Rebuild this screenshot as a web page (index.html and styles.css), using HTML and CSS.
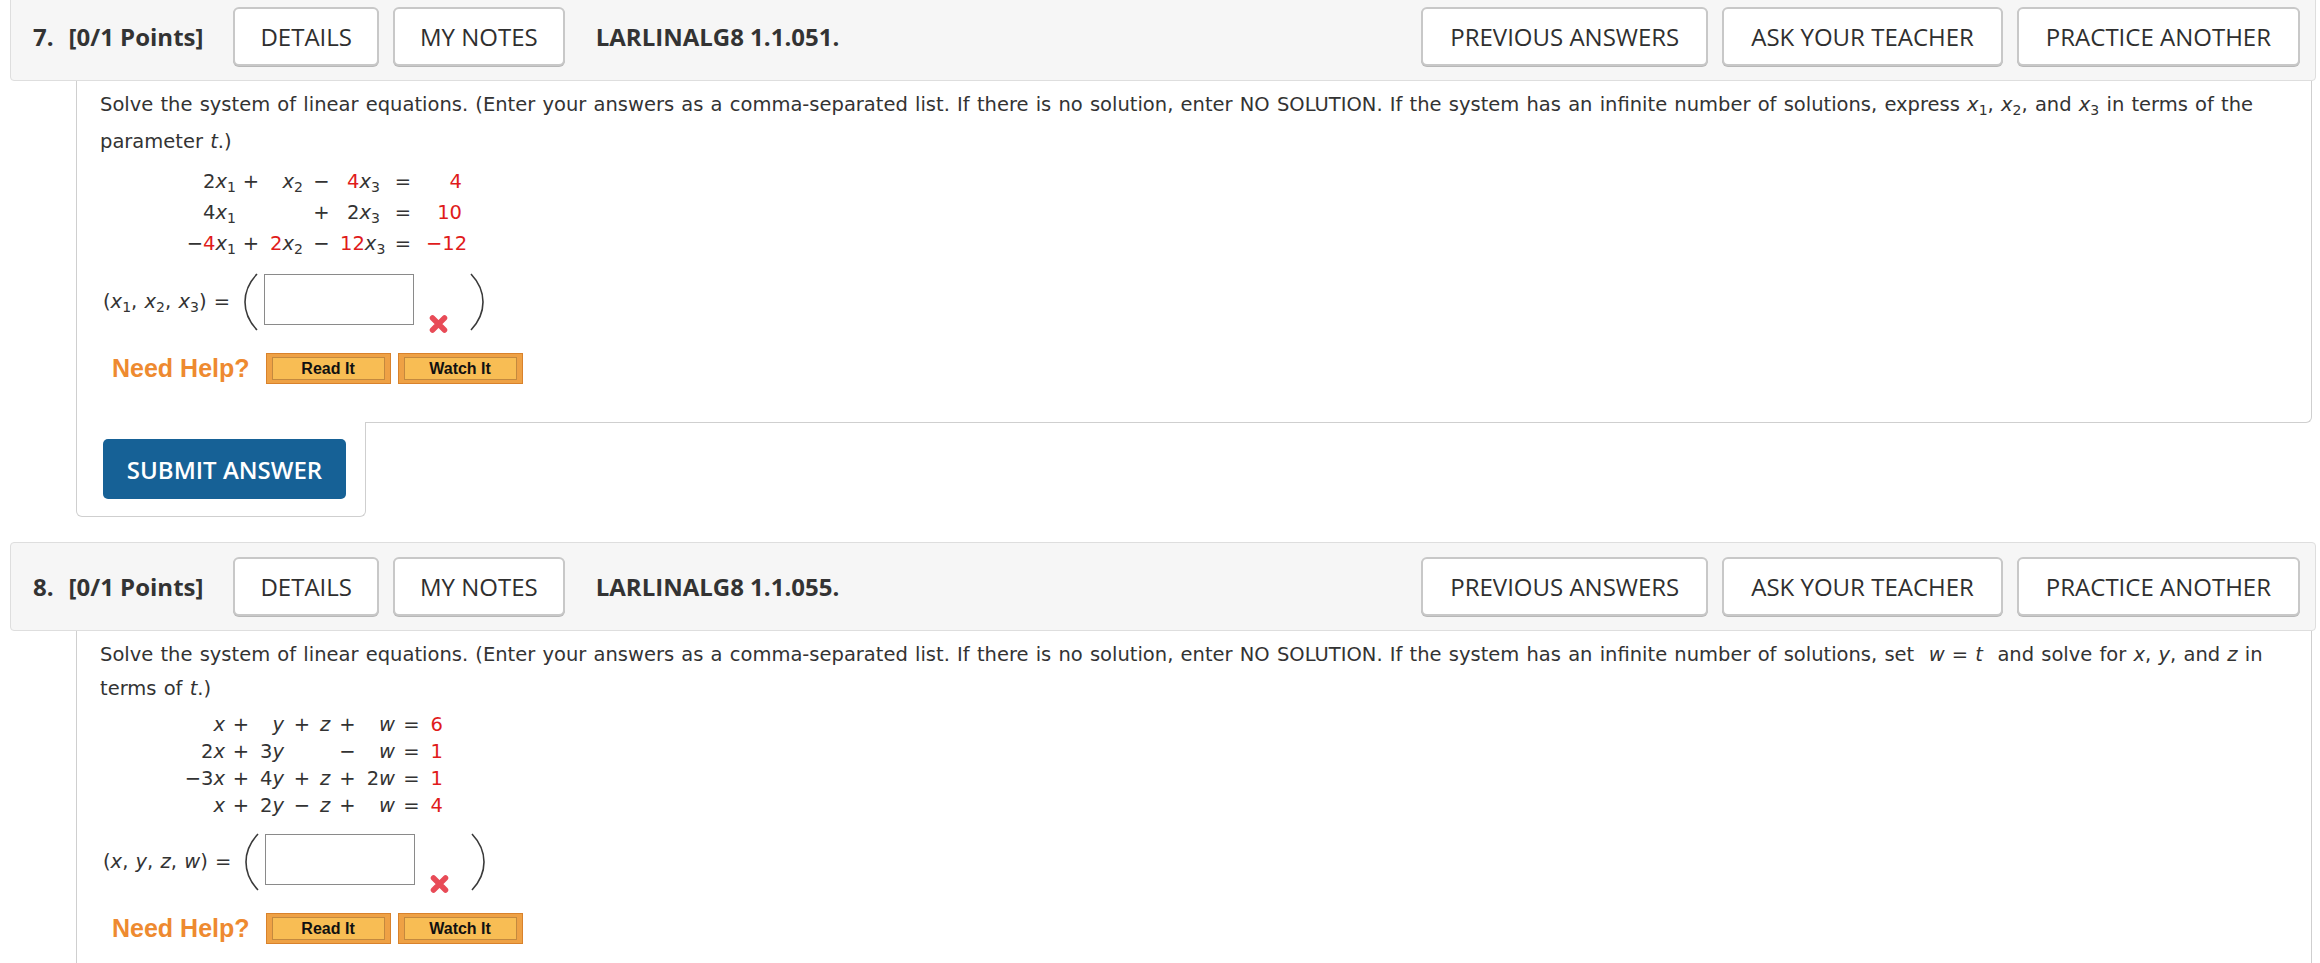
FILE: index.html
```html
<!DOCTYPE html>
<html lang="en">
<head>
<meta charset="utf-8">
<title>Questions</title>
<link rel="stylesheet" href="styles.css">
</head>
<body>
<div class="page">

  <section class="question">
    <header class="q-head">
      <span class="q-num">7.</span>
      <span class="q-pts">[0/1 Points]</span>
      <div class="btns">
        <button class="hbtn">DETAILS</button>
        <button class="hbtn">MY NOTES</button>
      </div>
      <span class="q-code">LARLINALG8 1.1.051.</span>
      <div class="btns btns-right">
        <button class="hbtn">PREVIOUS ANSWERS</button>
        <button class="hbtn">ASK YOUR TEACHER</button>
        <button class="hbtn">PRACTICE ANOTHER</button>
      </div>
    </header>
    <div class="q-body">
      <p class="q-text">Solve the system of linear equations. (Enter your answers as a comma-separated list. If there is no solution, enter NO SOLUTION. If the system has an infinite number of solutions, express <i>x</i><sub>1</sub>, <i>x</i><sub>2</sub>, and <i>x</i><sub>3</sub> in terms of the parameter <i>t</i>.)</p>
      <div class="eqs eqs7">
        <span class="t">2<i>x</i><sub>1</sub></span><span class="o">+</span><span class="t"><i>x</i><sub>2</sub></span><span class="o">−</span><span class="t"><span class="r">4</span><i>x</i><sub>3</sub></span><span class="o">=</span><span class="t r">4</span>
        <span class="t">4<i>x</i><sub>1</sub></span><span class="o"></span><span class="t"></span><span class="o">+</span><span class="t">2<i>x</i><sub>3</sub></span><span class="o">=</span><span class="t r">10</span>
        <span class="t">−<span class="r">4</span><i>x</i><sub>1</sub></span><span class="o">+</span><span class="t"><span class="r">2</span><i>x</i><sub>2</sub></span><span class="o">−</span><span class="t"><span class="r">12</span><i>x</i><sub>3</sub></span><span class="o">=</span><span class="t r">−12</span>
      </div>
      <div class="answer">
        <span class="ans-label">(<i>x</i><sub>1</sub>, <i>x</i><sub>2</sub>, <i>x</i><sub>3</sub>) =</span>
        <svg class="paren" viewBox="0 0 14 58"><path d="M13 1 C-3 18 -3 40 13 57"/></svg>
        <input class="ans-input" type="text" aria-label="answer 7">
        <svg class="xmark" viewBox="0 0 21 20"><path d="M4.5 4 L16.5 16 M16.5 4 L4.5 16"/></svg>
        <svg class="paren paren-close" viewBox="0 0 14 58"><path d="M1 1 C17 18 17 40 1 57"/></svg>
      </div>
      <div class="help">
        <span class="need">Need Help?</span>
        <button class="help-btn"><span>Read It</span></button>
        <button class="help-btn"><span>Watch It</span></button>
      </div>
    </div>
    <div class="submit-box">
      <button class="submit">SUBMIT ANSWER</button>
    </div>
  </section>

  <section class="question">
    <header class="q-head">
      <span class="q-num">8.</span>
      <span class="q-pts">[0/1 Points]</span>
      <div class="btns">
        <button class="hbtn">DETAILS</button>
        <button class="hbtn">MY NOTES</button>
      </div>
      <span class="q-code">LARLINALG8 1.1.055.</span>
      <div class="btns btns-right">
        <button class="hbtn">PREVIOUS ANSWERS</button>
        <button class="hbtn">ASK YOUR TEACHER</button>
        <button class="hbtn">PRACTICE ANOTHER</button>
      </div>
    </header>
    <div class="q-body">
      <p class="q-text">Solve the system of linear equations. (Enter your answers as a comma-separated list. If there is no solution, enter NO SOLUTION. If the system has an infinite number of solutions, set&nbsp; <i>w</i> = <i>t</i>&nbsp; and solve for <i>x</i>, <i>y</i>, and <i>z</i> in terms of <i>t</i>.)</p>
      <div class="eqs eqs8">
        <span class="t"><i>x</i></span><span class="o">+</span><span class="t"><i>y</i></span><span class="o">+</span><span class="t"><i>z</i></span><span class="o">+</span><span class="t"><i>w</i></span><span class="o">=</span><span class="t r">6</span>
        <span class="t">2<i>x</i></span><span class="o">+</span><span class="t">3<i>y</i></span><span class="o"></span><span class="t"></span><span class="o">−</span><span class="t"><i>w</i></span><span class="o">=</span><span class="t r">1</span>
        <span class="t">−3<i>x</i></span><span class="o">+</span><span class="t">4<i>y</i></span><span class="o">+</span><span class="t"><i>z</i></span><span class="o">+</span><span class="t">2<i>w</i></span><span class="o">=</span><span class="t r">1</span>
        <span class="t"><i>x</i></span><span class="o">+</span><span class="t">2<i>y</i></span><span class="o">−</span><span class="t"><i>z</i></span><span class="o">+</span><span class="t"><i>w</i></span><span class="o">=</span><span class="t r">4</span>
      </div>
      <div class="answer">
        <span class="ans-label">(<i>x</i>, <i>y</i>, <i>z</i>, <i>w</i>) =</span>
        <svg class="paren" viewBox="0 0 14 58"><path d="M13 1 C-3 18 -3 40 13 57"/></svg>
        <input class="ans-input" type="text" aria-label="answer 8">
        <svg class="xmark" viewBox="0 0 21 20"><path d="M4.5 4 L16.5 16 M16.5 4 L4.5 16"/></svg>
        <svg class="paren paren-close" viewBox="0 0 14 58"><path d="M1 1 C17 18 17 40 1 57"/></svg>
      </div>
      <div class="help">
        <span class="need">Need Help?</span>
        <button class="help-btn"><span>Read It</span></button>
        <button class="help-btn"><span>Watch It</span></button>
      </div>
    </div>
  </section>

</div>
</body>
</html>
```

FILE: styles.css
```css
* { box-sizing: border-box; }
html, body { margin: 0; padding: 0; background: #fff; }
body {
  font-family: "DejaVu Sans", Verdana, sans-serif;
  color: #333;
}
.page {
  padding: 0 4px 0 10px;
  margin-top: -8px;
}
.question { margin-bottom: 25px; }

/* header bar */
.q-head {
  display: flex;
  align-items: center;
  height: 89px;
  padding: 0 15px 0 22px;
  background: #f6f6f6;
  border: 1px solid #dedede;
  border-radius: 4px;
  font-family: "Open Sans", sans-serif;
  font-size: 24px;
  color: #333;
}
.q-num { font-weight: 700; margin-right: 15px; }
.q-pts { font-weight: 700; margin-right: 30px; }
.q-code { font-weight: 700; margin-left: 31px; }
.btns { display: flex; gap: 14px; }
.btns-right { margin-left: auto; }
.hbtn {
  height: 59px;
  padding: 0 25px;
  background: #fff;
  border: 2px solid #c8c8c8;
  border-radius: 6px;
  box-shadow: 0 1px 0 #b8b8b8;
  font-family: "Open Sans", sans-serif;
  font-size: 24px;
  font-weight: 400;
  color: #2f2f2f;
}
.btns-right .hbtn { padding: 0 27px; }

/* body */
.q-body {
  margin: 0 4px 0 66px;
  padding: 7px 24px 38px 23px;
  border: 1px solid #cfcfcf;
  border-top: 0;
  border-radius: 0 0 6px 0;
  font-size: 19.5px;
}
.q-text {
  margin: 0;
  line-height: 34px;
  word-spacing: 1px;
}
i { font-style: italic; }
sub {
  font-size: 0.72em;
  vertical-align: -0.3em;
  line-height: 0;
  font-style: normal;
}
.q-text sub { line-height: 30px; }
.r { color: #e01b1b; }

/* equations */
.eqs {
  display: grid;
  white-space: nowrap;
}
.eqs .t { text-align: right; }
.eqs .o { text-align: center; }
.eqs7 {
  grid-template-columns: 55px 30px 37px 37px 40px 46px 36px;
  grid-auto-rows: 31px;
  line-height: 31px;
  margin: 7px 0 0 81px;
}
.eqs8 {
  grid-template-columns: 42px 32px 27px 36px 10px 35px 30px 33px 15px;
  grid-auto-rows: 27px;
  line-height: 27px;
  margin: 5px 0 0 83px;
}

/* answer row */
.answer {
  display: flex;
  align-items: flex-start;
  height: 61px;
  margin-top: 14px;
  padding-left: 3px;
}
.ans-label {
  line-height: 58px;
  margin-right: 14px;
  white-space: nowrap;
  word-spacing: 1px;
}
.paren {
  width: 14px;
  height: 58px;
  fill: none;
  stroke: #3a3a3a;
  stroke-width: 1.6;
  overflow: visible;
}
.paren-close { margin-left: 21px; }
.ans-input {
  width: 150px;
  height: 51px;
  margin: 1px 0 0 6px;
  border: 1px solid #8a8a8a;
  background: #fff;
  padding: 0;
}
.xmark {
  width: 21px;
  height: 20px;
  margin: 41px 0 0 14px;
  fill: none;
  stroke: #e84b57;
  stroke-width: 5.5;
  stroke-linecap: round;
}

/* need help */
.help {
  display: flex;
  align-items: center;
  gap: 7px;
  margin-top: 19px;
  padding-left: 12px;
}
.need {
  font-family: "Liberation Sans", Arial, sans-serif;
  font-weight: 700;
  font-size: 25px;
  color: #ee8a30;
  margin-right: 9px;
}
.help-btn {
  width: 125px;
  height: 31px;
  padding: 3px 5px;
  background: #eea145;
  border: 1px solid #d9822c;
  display: flex;
}
.help-btn span {
  flex: 1;
  display: flex;
  align-items: center;
  justify-content: center;
  background: #f8bd54;
  border: 1px solid #c4893e;
  font-family: "Liberation Sans", Arial, sans-serif;
  font-weight: 700;
  font-size: 16px;
  color: #111;
}

/* submit */
.submit-box {
  width: 290px;
  margin: -1px 0 0 66px;
  padding: 17px 19px 17px 26px;
  background: #fff;
  border: 1px solid #cfcfcf;
  border-top: 0;
  border-radius: 0 0 6px 6px;
}
.submit {
  width: 243px;
  height: 60px;
  background: #166196;
  border: 0;
  border-radius: 5px;
  color: #fff;
  font-family: "Open Sans", sans-serif;
  font-weight: 600;
  font-size: 24px;
}
```
